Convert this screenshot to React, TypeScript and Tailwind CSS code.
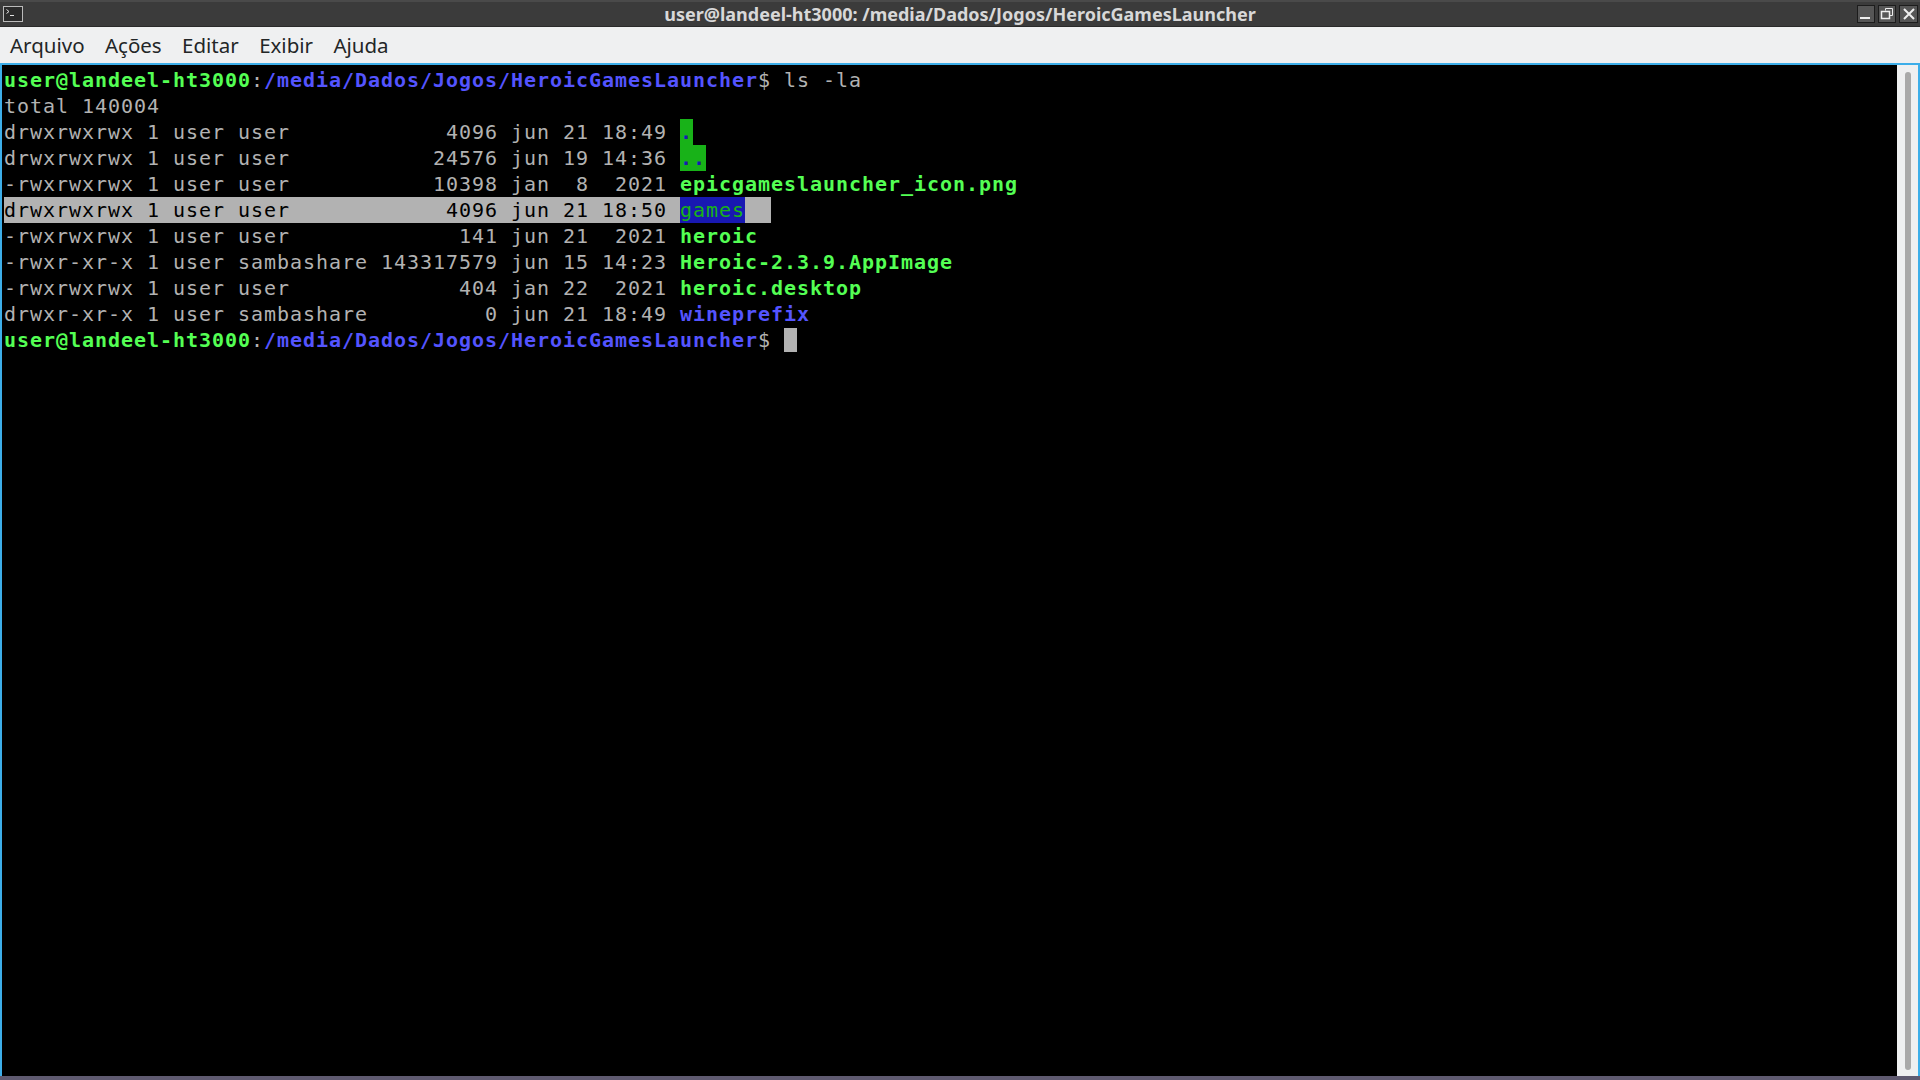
import React from "react";

const PROMPT_USER = "user@landeel-ht3000";
const PROMPT_PATH = "/media/Dados/Jogos/HeroicGamesLauncher";

const listing = [
  { meta: "drwxrwxrwx 1 user user            4096 jun 21 18:49 ", name: ".", kind: "dirOpen" },
  { meta: "drwxrwxrwx 1 user user           24576 jun 19 14:36 ", name: "..", kind: "dirOpen" },
  { meta: "-rwxrwxrwx 1 user user           10398 jan  8  2021 ", name: "epicgameslauncher_icon.png", kind: "exec" },
  { meta: "drwxrwxrwx 1 user user            4096 jun 21 18:50 ", name: "games", kind: "selected" },
  { meta: "-rwxrwxrwx 1 user user             141 jun 21  2021 ", name: "heroic", kind: "exec" },
  { meta: "-rwxr-xr-x 1 user sambashare 143317579 jun 15 14:23 ", name: "Heroic-2.3.9.AppImage", kind: "exec" },
  { meta: "-rwxrwxrwx 1 user user             404 jan 22  2021 ", name: "heroic.desktop", kind: "exec" },
  { meta: "drwxr-xr-x 1 user sambashare         0 jun 21 18:49 ", name: "wineprefix", kind: "dir" },
];

const Prompt = () => (
  <>
    <span className="font-bold text-[#54ff54]">{PROMPT_USER}</span>
    <span className="text-[#b2b2b2]">:</span>
    <span className="font-bold text-[#5454ff]">{PROMPT_PATH}</span>
    <span className="text-[#b2b2b2]">$ </span>
  </>
);

const Row = ({ meta, name, kind }: { meta: string; name: string; kind: string }) => {
  if (kind === "selected") {
    return (
      <div className="h-[26px] w-[767px] bg-[#b2b2b2] text-black">
        {meta}
        <span className="inline-block h-[26px] bg-[#1818b2] text-[#18b218]">{name}</span>
      </div>
    );
  }
  return (
    <div className="h-[26px] text-[#b2b2b2]">
      {meta}
      {kind === "dirOpen" && <span className="inline-block h-[26px] bg-[#18b218] font-bold text-[#1818b2]">{name}</span>}
      {kind === "exec" && <span className="font-bold text-[#54ff54]">{name}</span>}
      {kind === "dir" && <span className="font-bold text-[#5454ff]">{name}</span>}
    </div>
  );
};

const WinButton = ({ children }: { children: React.ReactNode }) => (
  <div className="flex h-[18px] w-[18px] items-center justify-center border border-[#1c1c1c] bg-[#565656] last:w-[19px]">{children}</div>
);

export default function App() {
  return (
    <div className="flex h-screen w-[1920px] flex-col overflow-hidden bg-[#eff0f1]">
      <header className="relative flex h-[27px] shrink-0 items-center justify-between border-t-2 border-b border-t-[#4a4a4a] border-b-[#2a2a2a] bg-[#3b3b3b] pl-[3px] pr-[2px]">
        <div className="flex h-[16px] w-[20px] items-center border border-[#bbbbbb] bg-[#2b2b2b] pl-[2px]">
          <svg width="12" height="10" viewBox="0 0 12 10" fill="none" stroke="#e0e0e0" strokeWidth="1">
            <path d="M0.5 0.5 L3 2.5 L0.5 4.5 M4 6.5 H8" />
          </svg>
        </div>
        <div className="absolute inset-x-0 -mt-[1px] text-center font-['Noto_Sans',sans-serif] text-[18px] font-bold leading-[24px] text-[#d8d8d8]">
          user@landeel-ht3000: /media/Dados/Jogos/HeroicGamesLauncher
        </div>
        <div className="flex gap-[3px]">
          <WinButton>
            <svg width="12" height="12" viewBox="0 0 12 12" fill="#eeeeee">
              <rect x="0" y="9" width="10" height="2" />
            </svg>
          </WinButton>
          <WinButton>
            <svg width="14" height="14" viewBox="0 0 14 14" fill="none" stroke="#eeeeee" strokeWidth="1">
              <path d="M5.5 3.5 V1.5 H12.5 V8.5 H9.5" />
              <rect x="1.5" y="4.5" width="8" height="7" strokeWidth="1.5" />
            </svg>
          </WinButton>
          <WinButton>
            <svg width="12" height="12" viewBox="0 0 12 12" fill="none" stroke="#eeeeee" strokeWidth="2">
              <path d="M1 1 L11 11 M11 1 L1 11" />
            </svg>
          </WinButton>
        </div>
      </header>

      <nav className="flex h-[36px] shrink-0 items-center gap-[20.4px] bg-[#eff0f1] pl-[10px] pt-[1px] font-['Noto_Sans',sans-serif] text-[20.5px] text-[#232627]">
        <span>Arquivo</span>
        <span>Ações</span>
        <span>Editar</span>
        <span>Exibir</span>
        <span>Ajuda</span>
      </nav>

      <main className="flex min-h-0 flex-1 border-x-2 border-t-2 border-[#3daee9]">
        <div className="flex-1 whitespace-pre bg-black pl-[2px] pt-[2px] font-['DejaVu_Sans_Mono',monospace] text-[20px] leading-[26px] tracking-[0.96px]">
          <div className="h-[26px]">
            <Prompt />
            <span className="text-[#b2b2b2]">ls -la</span>
          </div>
          <div className="h-[26px] text-[#b2b2b2]">total 140004</div>
          {listing.map((item) => (
            <Row key={item.name} {...item} />
          ))}
          <div className="flex h-[26px] items-center">
            <Prompt />
            <span className="h-[24px] w-[13px] bg-[#b2b2b2]" />
          </div>
        </div>
        <div className="flex w-[21px] shrink-0 justify-center bg-[#eff0f1] pb-[6px] pt-[7px]">
          <div className="w-[6px] rounded-full bg-[#a9a9a9]" />
        </div>
      </main>

      <footer className="h-[4px] shrink-0 bg-[#5f5a70]" />
    </div>
  );
}
